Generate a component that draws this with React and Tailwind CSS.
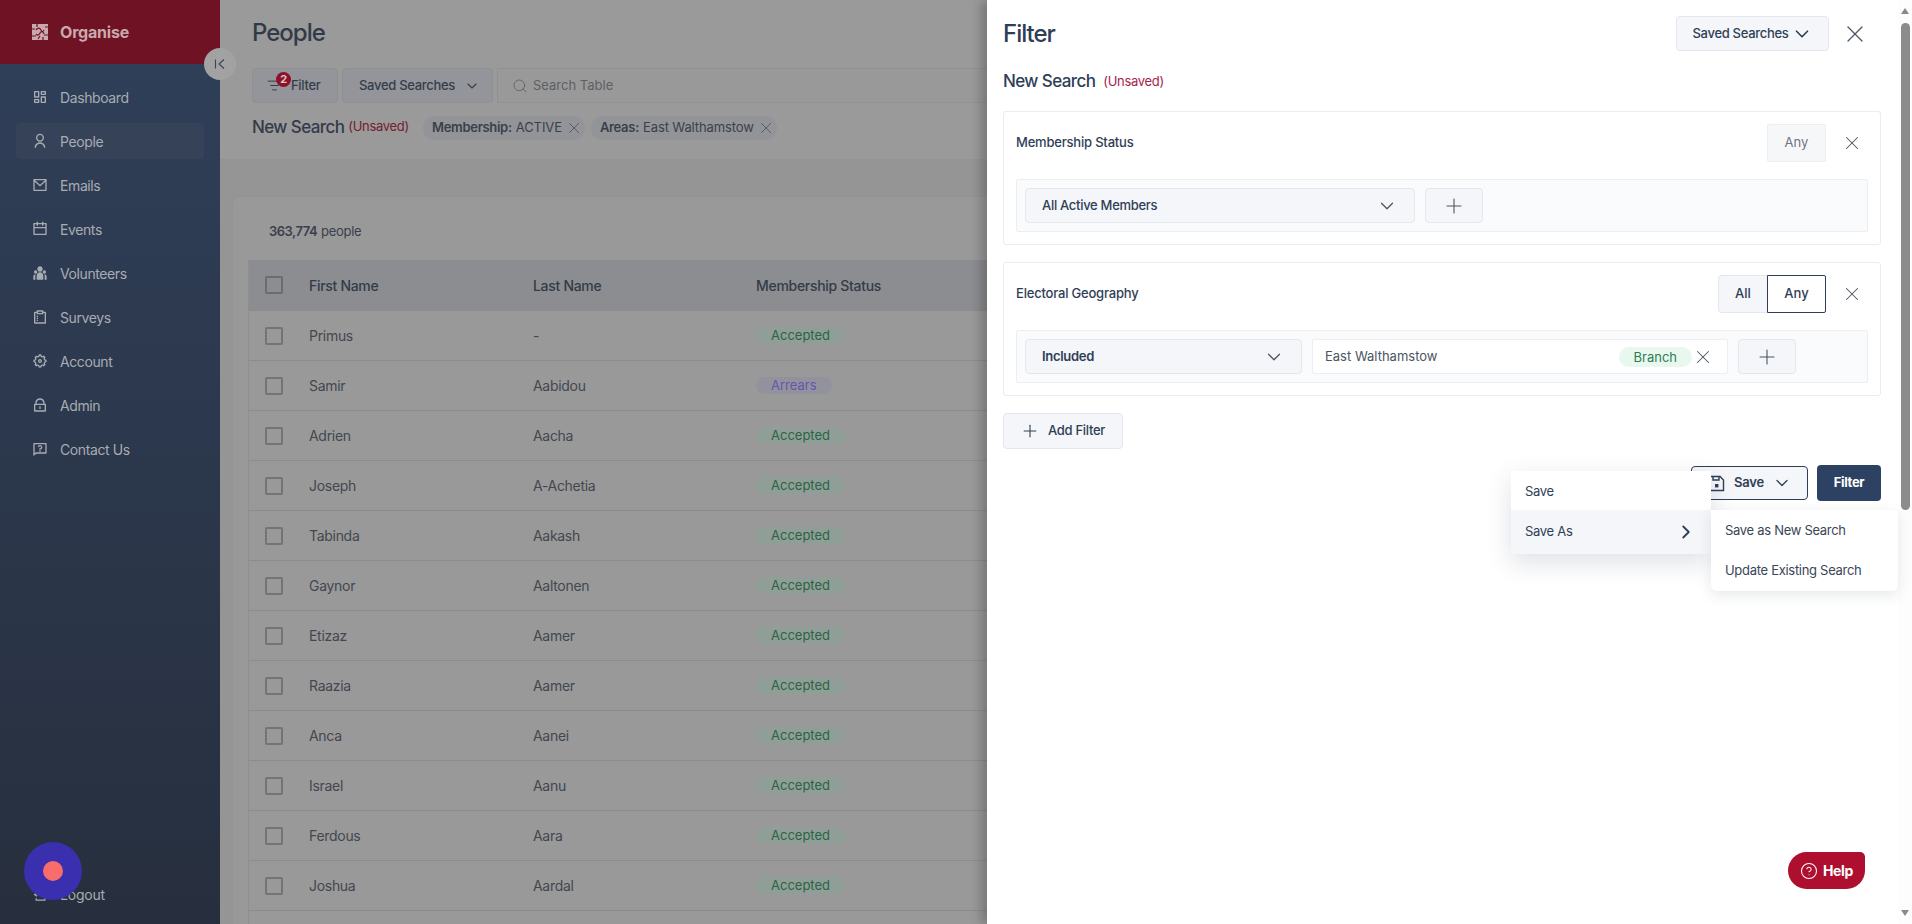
import React from "react";
import { Plus, X, ChevronDown, ChevronRight, Search, CircleHelp, ListFilter } from "lucide-react";
import { RiDashboardLine, RiUserLine, RiMailLine, RiCalendarLine, RiTeamFill, RiSurveyLine, RiSettings5Line, RiLockLine, RiQuestionnaireLine, RiLogoutBoxLine } from "react-icons/ri";

const nav = [
  ["Dashboard", RiDashboardLine],
  ["People", RiUserLine],
  ["Emails", RiMailLine],
  ["Events", RiCalendarLine],
  ["Volunteers", RiTeamFill],
  ["Surveys", RiSurveyLine],
  ["Account", RiSettings5Line],
  ["Admin", RiLockLine],
  ["Contact Us", RiQuestionnaireLine],
];

const rows = [
  ["Primus", "-", "Accepted"],
  ["Samir", "Aabidou", "Arrears"],
  ["Adrien", "Aacha", "Accepted"],
  ["Joseph", "A-Achetia", "Accepted"],
  ["Tabinda", "Aakash", "Accepted"],
  ["Gaynor", "Aaltonen", "Accepted"],
  ["Etizaz", "Aamer", "Accepted"],
  ["Raazia", "Aamer", "Accepted"],
  ["Anca", "Aanei", "Accepted"],
  ["Israel", "Aanu", "Accepted"],
  ["Ferdous", "Aara", "Accepted"],
  ["Joshua", "Aardal", "Accepted"],
  ["", "", ""],
];

function Logo() {
  return (
    <svg width="16" height="16" viewBox="0 0 16 16">
      <rect width="16" height="16" fill="#c9a9ae" />
      <path d="M0 5h3M13 3h3M0 12h4M12 11h4M5 0v3M11 13v3M4 6c2-3 4-2 5 0s2 2 3 0M4 10c2 2 3 1 4-1s3-2 4 1M8 12l-2 3" fill="none" stroke="#6f1223" strokeWidth="1.2" />
    </svg>
  );
}

function Chip({ label, value }) {
  return (
    <span className="flex h-[24px] items-center rounded-full bg-[#929498] pl-[9px] pr-[2px] text-[13px] tracking-[-0.1px] text-[#3a404b]">
      <b className="mr-1 font-semibold tracking-[-0.3px]">{label}</b>
      {value}
      <X size={18} strokeWidth={1.1} className="ml-[3px] text-[#4b5058]" />
    </span>
  );
}

function Sidebar() {
  return (
    <aside className="relative flex h-[924px] w-[220px] shrink-0 flex-col bg-gradient-to-b from-[#30405a] to-[#272f3e]">
      <div className="flex h-[64px] items-center bg-[#6f1223] pl-[32px]">
        <Logo />
        <span className="ml-[12px] text-[16px] font-bold tracking-[-0.2px] text-[#c9a9ae]">Organise</span>
      </div>
      <button className="absolute left-[204px] top-[48px] flex h-[32px] w-[32px] items-center justify-center rounded-full bg-[#a2a2a2] text-[#3c4350]">
        <svg width="12" height="12" viewBox="0 0 12 12" fill="none" stroke="currentColor" strokeWidth="1.1">
          <path d="M1.5 1.5v9M10 1.5 5 6l5 4.5" />
        </svg>
      </button>
      <nav className="mt-[15px] flex flex-col gap-[8px] px-[16px]">
        {nav.map(([label, Icon]) => (
          <a
            key={label}
            className={"flex h-[36px] items-center rounded-[4px] pl-[16px] text-[14px] tracking-[-0.4px] text-[#a8acb3] " + (label === "People" ? "bg-[#354258]" : "")}
          >
            <Icon size={16} className="mr-[12px]" />
            {label}
          </a>
        ))}
      </nav>
      <a className="mb-[19px] mt-auto flex items-center pl-[33px] text-[14px] tracking-[-0.2px] text-[#a8acb3]">
        <RiLogoutBoxLine size={15} className="mr-[12px]" />
        Logout
      </a>
      <div className="absolute left-[24px] top-[842px] flex h-[58px] w-[58px] items-center justify-center rounded-full bg-[#3a2fae]">
        <span className="h-[20px] w-[20px] rounded-full bg-[#f96c6c]" />
      </div>
    </aside>
  );
}

function Toolbar() {
  return (
    <header className="h-[160px] shrink-0 border-b border-[#949494] bg-[#9a9a9a] pl-[32px] pt-[17px]">
      <h1 className="text-[24px] font-medium leading-[32px] tracking-[-1px] text-[#323a48]">People</h1>
      <div className="mt-[19px] flex h-[35px] gap-[4px]">
        <button className="relative w-[86px] rounded-[4px] border border-[#8e9094] bg-[#93959a] pl-[38px] text-left text-[13px] font-medium tracking-[-0.3px] text-[#363d4a]">
          <ListFilter size={15} strokeWidth={1.6} className="absolute left-[14px] top-[9px]" />
          <span className="absolute left-[23px] top-[3px] flex h-[15px] w-[15px] items-center justify-center rounded-full bg-[#8f1029] text-[11px] font-bold leading-none text-[#d8c8cb]">2</span>
          Filter
        </button>
        <button className="flex w-[151px] items-center gap-[9px] rounded-[4px] border border-[#8e9094] bg-[#93959a] pl-[16px] text-[13px] font-medium tracking-[-0.3px] text-[#363d4a]">
          Saved Searches
          <ChevronDown size={16} strokeWidth={1.6} />
        </button>
        <div className="flex flex-1 items-center gap-[5px] border border-[#919191] bg-[#999999] pl-[14px] text-[13px] text-[#5d6066]">
          <Search size={16} strokeWidth={1.3} />
          Search Table
        </div>
      </div>
      <div className="mt-[11px] flex h-[26px] items-center">
        <span className="text-[17px] font-medium leading-[26px] tracking-[-0.6px] text-[#333b49]">New Search</span>
        <span className="ml-[4px] text-[13px] tracking-[-0.3px] text-[#74202f]">(Unsaved)</span>
        <span className="ml-[14px] mt-[1px] flex gap-[6px]">
          <Chip label="Membership:" value="ACTIVE" />
          <Chip label="Areas:" value="East Walthamstow" />
        </span>
      </div>
    </header>
  );
}

function PeopleTable() {
  return (
    <section className="ml-[12px] mt-[36px] flex-1 rounded-t-[8px] border-l border-t border-[#949494] bg-[#999999] pl-[15px]">
      <p className="flex h-[63px] items-center pl-[21px] pt-[6px] text-[13px] tracking-[-0.3px] text-[#3a404b]">
        <b className="mr-1 font-semibold tracking-[-0.5px]">363,774</b> people
      </p>
      <div className="border-l border-[#8f8f8f]">
        <div className="flex h-[51px] items-center border-b border-[#8a8c8e] bg-[#8b8d90] text-[14px] font-medium tracking-[-0.3px] text-[#343b48]">
          <span className="ml-[16px] h-[18px] w-[18px] rounded-[2px] border-2 border-[#6a6c70]" />
          <span className="ml-[26px] w-[224px]">First Name</span>
          <span className="w-[223px]">Last Name</span>
          <span>Membership Status</span>
        </div>
        {rows.map(([first, last, status], i) => (
          <div key={i} className="flex h-[50px] items-center border-b border-[#8c8c8c] text-[14px] tracking-[-0.3px] text-[#43474f]">
            <span className="ml-[16px] h-[18px] w-[18px] rounded-[2px] border-2 border-[#737478]" />
            <span className="ml-[26px] w-[224px]">{first}</span>
            <span className="w-[223px]">{last}</span>
            {status === "Accepted" && (
              <span className="rounded-full bg-[#8f9f98] px-[15px] text-[13px] leading-[17px] tracking-[0px] text-[#2d6244]">Accepted</span>
            )}
            {status === "Arrears" && (
              <span className="rounded-full bg-[#92929f] px-[15px] text-[13px] leading-[17px] tracking-[0px] text-[#6456a8]">Arrears</span>
            )}
          </div>
        ))}
      </div>
    </section>
  );
}

const btn = "flex items-center rounded-[4px] border border-[#e4e7ec] bg-[#f4f6f9]";

function AnyAll({ both }) {
  return (
    <div className="ml-auto flex h-[38px]">
      {both && <button className={btn + " w-[49px] justify-center rounded-r-none border-r-0 text-[13px] font-medium text-[#2f3e56]"}>All</button>}
      <button
        className={
          "w-[59px] rounded-[2px] text-[13px] " +
          (both ? "rounded-l-none border border-[#2f3e56] bg-white font-medium text-[#2f3e56]" : "border border-[#eceef2] bg-[#f6f7f9] text-[#70757f]")
        }
      >
        Any
      </button>
    </div>
  );
}

function FilterCard({ title, both, children }) {
  return (
    <div className="rounded-[3px] border border-[#e9ecf0] p-[12px]">
      <div className="flex h-[38px] items-center">
        <h3 className="text-[13px] font-medium tracking-[-0.2px] text-[#2f3e56]">{title}</h3>
        <AnyAll both={both} />
        <X size={22} strokeWidth={1.1} className="ml-[15px] mr-[5px] text-[#4b5563]" />
      </div>
      <div className="mt-[17px] flex h-[53px] items-center gap-[10px] rounded-[2px] border border-[#eceef2] bg-[#fafbfc] px-[8px]">
        {children}
      </div>
    </div>
  );
}

function SelectBox({ w, text, bold }) {
  return (
    <div className={btn + " h-[35px] justify-between pl-[16px] pr-[16px] pt-[1px] text-[13px] tracking-[-0.3px] text-[#2f3e56] " + (bold ? "font-semibold" : "font-medium")} style={{ width: w }}>
      {text}
      <ChevronDown size={22} strokeWidth={1.4} className="text-[#4b5563]" />
    </div>
  );
}

function PlusBtn() {
  return (
    <button className={btn + " h-[35px] w-[58px] justify-center"}>
      <Plus size={24} strokeWidth={1.1} className="text-[#4b5563]" />
    </button>
  );
}

function SaveIcon() {
  return (
    <svg width="17" height="17" viewBox="0 0 17 17" fill="none" stroke="currentColor" strokeWidth="1.4" className="mr-[9px]">
      <path d="M2 1.5h10l3.5 3.5v10.5H2z" />
      <path d="M5 1.5v3.5h6V1.5" />
      <rect x="7" y="9" width="3.4" height="3.4" fill="currentColor" stroke="none" />
    </svg>
  );
}

function Drawer() {
  return (
    <aside className="absolute inset-y-0 right-0 flex w-[925px] bg-white shadow-[-6px_0_10px_rgba(0,0,0,0.22)]">
      <div className="relative w-[911px] px-[16px] pt-[16px]">
        <div className="flex h-[35px] items-center">
          <h2 className="text-[24px] font-medium tracking-[-1px] text-[#2f3e56]">Filter</h2>
          <button className={btn + " ml-auto h-[35px] w-[153px] justify-center gap-[2px] text-[13px] font-medium tracking-[-0.3px] text-[#2f3e56]"}>
            Saved Searches
            <ChevronDown size={22} strokeWidth={1.8} />
          </button>
          <X size={28} strokeWidth={1.1} className="ml-[12px] mr-[13px] text-[#4b5563]" />
        </div>
        <div className="mt-[18px] flex h-[26px] items-center">
          <span className="text-[17px] font-medium tracking-[-0.6px] text-[#2f3e56]">New Search</span>
          <span className="ml-[8px] text-[13px] tracking-[-0.3px] text-[#a5254a]">(Unsaved)</span>
        </div>
        <div className="mt-[16px] flex w-[878px] flex-col gap-[17px]">
          <FilterCard title="Membership Status">
            <SelectBox w={390} text="All Active Members" />
            <PlusBtn />
          </FilterCard>
          <FilterCard title="Electoral Geography" both>
            <SelectBox w={277} text="Included" bold />
            <div className="flex h-[35px] w-[416px] items-center rounded-[2px] border border-[#eceef2] bg-white pl-[12px] pr-[13px] text-[13px] text-[#4b5563]">
              East Walthamstow
              <span className="ml-auto rounded-full bg-[#e8f8ee] px-[15px] text-[13px] leading-[20px] text-[#2e7d55]">Branch</span>
              <X size={22} strokeWidth={1.1} />
            </div>
            <PlusBtn />
          </FilterCard>
        </div>
        <button className={btn + " mt-[17px] h-[36px] w-[120px] gap-[8px] pl-[16px] text-[13px] font-medium tracking-[-0.3px] text-[#2f3e56]"}>
          <Plus size={20} strokeWidth={1.3} />
          Add Filter
        </button>
        <div className="mt-[16px] flex w-[878px] items-center justify-end gap-[9px]">
          <button className="flex h-[34px] w-[117px] items-center justify-end rounded-[4px] border border-[#2f3e56] bg-[#f4f6f9] pr-[15px] text-[13px] font-semibold tracking-[-0.2px] text-[#2f3e56]">
            <SaveIcon />
            Save
            <ChevronDown size={20} strokeWidth={1.5} className="ml-[8px]" />
          </button>
          <button className="h-[36px] w-[64px] rounded-[4px] bg-[#2d4263] text-[13px] font-bold tracking-[-0.3px] text-white">Filter</button>
        </div>

        <div className="absolute left-[524px] top-[471px] w-[200px] bg-white text-[13px] tracking-[-0.3px] text-[#2f3e56] shadow-[0_8px_24px_rgba(47,62,86,0.16)]">
          <div className="flex h-[39px] items-center pl-[14px] pt-[2px]">Save</div>
          <div className="flex h-[44px] items-center justify-between bg-[#f4f6f9] pl-[14px] pr-[14px]">
            Save As
            <ChevronRight size={22} strokeWidth={2} />
          </div>
        </div>
        <div className="absolute left-[724px] top-[510px] z-10 w-[187px] rounded-b-[6px] bg-white pt-[1px] text-[13px] tracking-[-0.3px] text-[#3b4657] shadow-[0_4px_14px_rgba(47,62,86,0.12)]">
          <div className="flex h-[40px] items-center pl-[14px]">Save as New Search</div>
          <div className="flex h-[40px] items-center pl-[14px]">Update Existing Search</div>
        </div>
        <button className="absolute left-[801px] top-[852px] flex h-[37px] w-[77px] items-center justify-center gap-[5px] rounded-[19px] rounded-tr-[5px] bg-[#ae0f2e] text-[14px] font-bold tracking-[-0.3px] text-white">
          <CircleHelp size={18} strokeWidth={1.4} />
          Help
        </button>
      </div>
      <div className="flex w-[14px] flex-col items-center bg-[#fdfdfd]">
        <span className="mt-[8px] h-0 w-0 border-x-[4px] border-b-[6px] border-x-transparent border-b-[#8a8a8a]" />
        <span className="ml-[1px] mt-[9px] h-[487px] w-[9px] rounded-full bg-[#8c8c8c]" />
        <span className="mb-[8px] mt-auto h-0 w-0 border-x-[4px] border-t-[6px] border-x-transparent border-t-[#8a8a8a]" />
      </div>
    </aside>
  );
}

export default function App() {
  return (
    <div className="relative flex h-[924px] w-[1912px] overflow-hidden bg-[#959595] font-['Inter','Noto_Sans',sans-serif]">
      <Sidebar />
      <main className="flex h-[924px] flex-1 flex-col overflow-hidden">
        <Toolbar />
        <PeopleTable />
      </main>
      <Drawer />
    </div>
  );
}
